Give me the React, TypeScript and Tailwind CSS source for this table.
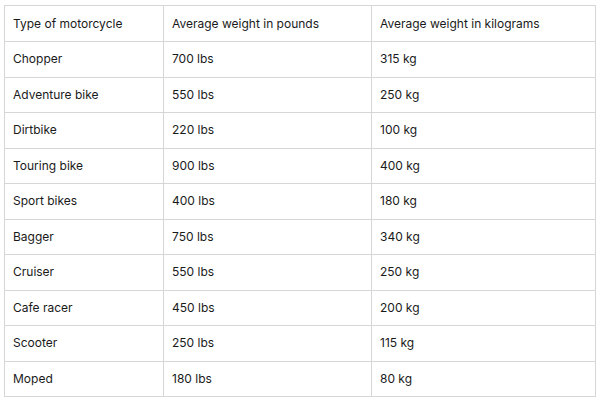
import React from "react";

const rows: [string, string, string][] = [
  ["Chopper", "700 lbs", "315 kg"],
  ["Adventure bike", "550 lbs", "250 kg"],
  ["Dirtbike", "220 lbs", "100 kg"],
  ["Touring bike", "900 lbs", "400 kg"],
  ["Sport bikes", "400 lbs", "180 kg"],
  ["Bagger", "750 lbs", "340 kg"],
  ["Cruiser", "550 lbs", "250 kg"],
  ["Cafe racer", "450 lbs", "200 kg"],
  ["Scooter", "250 lbs", "115 kg"],
  ["Moped", "180 lbs", "80 kg"],
];

const cell = "border border-[#d6d6d6] pl-[8px] pr-2 align-middle text-left font-normal";

const App: React.FC = () => {
  return (
    <div className="w-[600px] h-[403px] bg-white pt-[5px] pl-[4px] font-['Inter',sans-serif] text-[12px] text-[#1a1a1a]">
      <table className="border-collapse table-fixed w-[591px]">
        <colgroup>
          <col className="w-[159px]" />
          <col className="w-[208px]" />
          <col className="w-[224px]" />
        </colgroup>
        <thead>
          <tr className="h-[36px]">
            <th className={cell}>Type of motorcycle</th>
            <th className={cell}>Average weight in pounds</th>
            <th className={cell}>Average weight in kilograms</th>
          </tr>
        </thead>
        <tbody>
          {rows.map((r) => (
            <tr key={r[0]} className="h-[35.5px]">
              <td className={cell}>{r[0]}</td>
              <td className={cell}>{r[1]}</td>
              <td className={cell}>{r[2]}</td>
            </tr>
          ))}
        </tbody>
      </table>
    </div>
  );
};

export default App;
